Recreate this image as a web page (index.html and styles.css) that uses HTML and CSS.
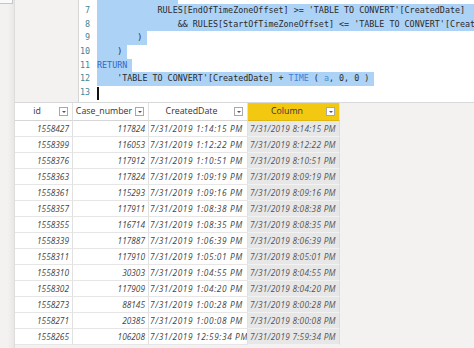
FILE: index.html
```html
<!DOCTYPE html>
<html lang="en">
<head>
    <meta charset="UTF-8">
    <meta name="viewport" content="width=device-width, initial-scale=1.0">
    <title>Data view - TABLE TO CONVERT</title>
    <link rel="stylesheet" href="styles.css">
</head>
<body>
    <div class="rail">
        <div class="rail-box"></div>
    </div>

    <div class="main">
        <div class="top">
            <div class="side"></div>
            <div class="editor">
                <div class="lines">
                    <div class="line"><span class="ln"></span><span class="sel">               </span></div>
                    <div class="line"><span class="ln">7</span><span class="sel full">            RULES[EndOfTimeZoneOffset] &gt;= 'TABLE TO CONVERT'[CreatedDate]</span></div>
                    <div class="line"><span class="ln">8</span><span class="sel full">                &amp;&amp; RULES[StartOfTimeZoneOffset] &lt;= 'TABLE TO CONVERT'[CreatedDate]</span></div>
                    <div class="line"><span class="ln">9</span><span class="sel">        )</span></div>
                    <div class="line"><span class="ln">10</span><span class="sel">    )</span></div>
                    <div class="line"><span class="ln">11</span><span class="sel"><span class="kw">RETURN</span></span></div>
                    <div class="line"><span class="ln">12</span><span class="sel">    'TABLE TO CONVERT'[CreatedDate] + <span class="fn">TIME</span> ( <span class="var">a</span>, 0, 0 )</span></div>
                    <div class="line"><span class="ln">13</span><span class="cursor"></span></div>
                </div>
            </div>
        </div>

        <div class="grid">
            <div class="row head">
                <div class="cell"><span class="label">id</span><span class="drop"></span></div>
                <div class="cell"><span class="label">Case_number</span><span class="drop"></span></div>
                <div class="cell"><span class="label">CreatedDate</span><span class="drop"></span></div>
                <div class="cell active"><span class="label">Column</span><span class="drop"></span></div>
            </div>

            <div class="row"><div class="cell num">1558427</div><div class="cell num">117824</div><div class="cell date">7/31/2019 1:14:15 PM</div><div class="cell calc">7/31/2019 8:14:15 PM</div></div>
            <div class="row"><div class="cell num">1558399</div><div class="cell num">116053</div><div class="cell date">7/31/2019 1:12:22 PM</div><div class="cell calc">7/31/2019 8:12:22 PM</div></div>
            <div class="row"><div class="cell num">1558376</div><div class="cell num">117912</div><div class="cell date">7/31/2019 1:10:51 PM</div><div class="cell calc">7/31/2019 8:10:51 PM</div></div>
            <div class="row"><div class="cell num">1558363</div><div class="cell num">117824</div><div class="cell date">7/31/2019 1:09:19 PM</div><div class="cell calc">7/31/2019 8:09:19 PM</div></div>
            <div class="row"><div class="cell num">1558361</div><div class="cell num">115293</div><div class="cell date">7/31/2019 1:09:16 PM</div><div class="cell calc">7/31/2019 8:09:16 PM</div></div>
            <div class="row"><div class="cell num">1558357</div><div class="cell num">117911</div><div class="cell date">7/31/2019 1:08:38 PM</div><div class="cell calc">7/31/2019 8:08:38 PM</div></div>
            <div class="row"><div class="cell num">1558355</div><div class="cell num">116714</div><div class="cell date">7/31/2019 1:08:35 PM</div><div class="cell calc">7/31/2019 8:08:35 PM</div></div>
            <div class="row"><div class="cell num">1558339</div><div class="cell num">117887</div><div class="cell date">7/31/2019 1:06:39 PM</div><div class="cell calc">7/31/2019 8:06:39 PM</div></div>
            <div class="row"><div class="cell num">1558311</div><div class="cell num">117910</div><div class="cell date">7/31/2019 1:05:01 PM</div><div class="cell calc">7/31/2019 8:05:01 PM</div></div>
            <div class="row"><div class="cell num">1558310</div><div class="cell num">30303</div><div class="cell date">7/31/2019 1:04:55 PM</div><div class="cell calc">7/31/2019 8:04:55 PM</div></div>
            <div class="row"><div class="cell num">1558302</div><div class="cell num">117909</div><div class="cell date">7/31/2019 1:04:20 PM</div><div class="cell calc">7/31/2019 8:04:20 PM</div></div>
            <div class="row"><div class="cell num">1558273</div><div class="cell num">88145</div><div class="cell date">7/31/2019 1:00:28 PM</div><div class="cell calc">7/31/2019 8:00:28 PM</div></div>
            <div class="row"><div class="cell num">1558271</div><div class="cell num">20385</div><div class="cell date">7/31/2019 1:00:08 PM</div><div class="cell calc">7/31/2019 8:00:08 PM</div></div>
            <div class="row"><div class="cell num">1558265</div><div class="cell num">106208</div><div class="cell date">7/31/2019 12:59:34 PM</div><div class="cell calc">7/31/2019 7:59:34 PM</div></div>
        </div>
    </div>
</body>
</html>
```

FILE: styles.css
```css
body {
    margin: 0;
    width: 474px;
    height: 348px;
    overflow: hidden;
    background-color: #f3f2f1;
    font-family: "Open Sans", "Liberation Sans", sans-serif;
    color: #333;
    display: flex;
}

/* left rail */
.rail {
    width: 15px;
    flex: none;
    box-sizing: border-box;
    border-right: 1px solid #dedddc;
    background: linear-gradient(to right, #f3f2f1 55%, #e8e7e6);
}
.rail-box {
    width: 12px;
    height: 3px;
    background-color: #fafafa;
    border-right: 1px solid #c6c6c6;
    border-bottom: 1px solid #c6c6c6;
}

.main {
    flex: 1;
    min-width: 0;
    display: flex;
    flex-direction: column;
}

/* formula editor */
.top {
    height: 102px;
    flex: none;
    display: flex;
}
.side {
    width: 63px;
    flex: none;
}
.editor {
    flex: 1;
    min-width: 0;
    overflow: hidden;
    background-color: #fff;
    border-left: 1px solid #d6d6d6;
    font-family: "DejaVu Sans Mono", "Liberation Mono", monospace;
    font-size: 8.4px;
    line-height: 13.67px;
    color: #2b2b2b;
}
.lines {
    margin-top: -9.5px;
}
.line {
    display: flex;
    height: 13.67px;
    white-space: pre;
}
.ln {
    width: 11px;
    flex: none;
    margin-right: 7px;
    text-align: right;
    color: #3f8596;
}
.sel {
    background-color: #acd2f6;
    padding-right: 1ch;
}
.sel.full {
    flex: 1;
}
.kw {
    color: #2f68cc;
}
.fn {
    color: #3a82d8;
}
.var {
    color: #4a90d0;
}
.cursor {
    width: 1.5px;
    height: 13px;
    margin-top: 1px;
    background-color: #111;
}

/* data grid */
.grid {
    flex: 1;
    border-top: 1px solid #d9d9d9;
}
.row {
    display: grid;
    grid-template-columns: 58px 76px 99px 92px;
    height: 16px;
}
.cell {
    box-sizing: border-box;
    border-right: 1px solid #e1e1e1;
    border-bottom: 1px solid #e6e6e6;
    background-color: #fff;
    font-size: 8.3px;
    font-style: italic;
    line-height: 15px;
    color: #444;
    white-space: nowrap;
    overflow: hidden;
}
.num {
    text-align: right;
    padding-right: 3px;
}
.date {
    padding-left: 1px;
    letter-spacing: 0.6px;
}
.calc {
    background-color: #e7e7e7;
    border-bottom-color: #f2f2f2;
    border-right-color: #dcdcdc;
    padding-left: 2px;
    color: #555;
    letter-spacing: 0.25px;
}

.head {
    height: 18px;
}
.head .cell {
    display: flex;
    align-items: center;
    font-style: normal;
    font-size: 8.8px;
    line-height: 17px;
    letter-spacing: 0;
    color: #333;
    border-bottom: 1px solid #d6d6d6;
    padding-right: 4px;
}
.head .active {
    background-color: #f2c811;
    border-bottom-color: #e0b70c;
}
.label {
    flex: 1;
    text-align: center;
}
.drop {
    width: 9px;
    height: 9px;
    flex: none;
    box-sizing: border-box;
    border: 1px solid #a8a8a8;
    background-color: #fff;
    position: relative;
}
.drop::after {
    content: "";
    position: absolute;
    left: 2px;
    top: 3px;
    border-left: 2px solid transparent;
    border-right: 2px solid transparent;
    border-top: 2px solid #555;
}
```
